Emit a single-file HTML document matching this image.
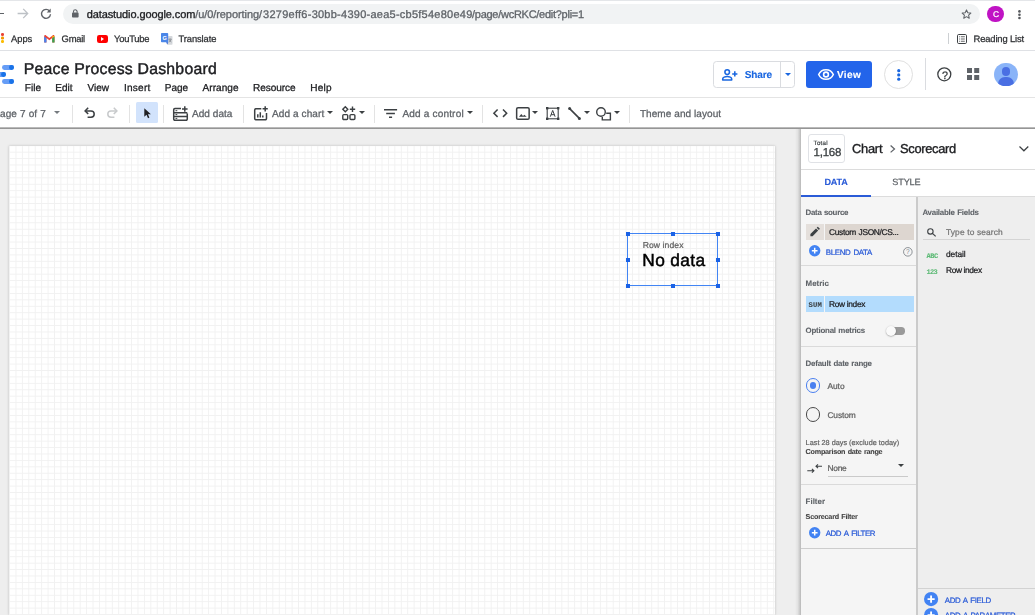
<!DOCTYPE html>
<html><head><meta charset="utf-8">
<style>
*{box-sizing:border-box;margin:0;padding:0}
html,body{width:1035px;height:615px;overflow:hidden;background:#fff;font-family:"Liberation Sans",sans-serif;color:#202124}
body{position:relative}
.a{position:absolute}
svg{position:absolute;overflow:visible}
.sep{position:absolute;top:105px;width:1px;height:17.500px;background:#e3e3e3}
.tri{position:absolute;width:0;height:0;margin-left:-.3px;border-top:3.400px solid #3c4043;border-left:3.200px solid transparent;border-right:3.200px solid transparent}
</style></head><body>

<!-- ===== Browser chrome ===== -->
<div class="a" style="left:0;top:0;width:1035px;height:1px;background:#e4e6e9"></div>
<div class="a" style="left:0;top:49.500px;width:1035px;height:1.500px;background:#dfe1e5"></div>
<div class="a" style="left:62.500px;top:3.500px;width:917px;height:20.500px;border-radius:10.250px;background:#f1f3f4"></div>
<div class="a" style="left:0;top:12.600px;width:4.300px;height:1.700px;background:#5f6368"></div>
<svg style="left:17px;top:8px" width="12" height="11" viewBox="0 0 12 11"><path d="M.6 5.500h10M6.200 .900l4.500 4.600-4.500 4.600" fill="none" stroke="#bdc1c6" stroke-width="1.300"/></svg>
<svg style="left:40px;top:8px" width="12" height="12" viewBox="0 0 12 12"><path d="M9.600 3.100A4.500 4.500 0 1 0 10.500 6.300" fill="none" stroke="#5f6368" stroke-width="1.400"/><path d="M10.700 .500v4H6.700z" fill="#5f6368"/></svg>
<svg style="left:72px;top:8.800px" width="7" height="9" viewBox="0 0 7 9"><rect x="0" y="3.600" width="6.600" height="5" rx=".8" fill="#5f6368"/><path d="M1.500 3.800V2.600a1.800 1.800 0 0 1 3.600 0v1.200" fill="none" stroke="#5f6368" stroke-width="1.100"/></svg>
<svg style="left:961px;top:9px" width="11" height="10" viewBox="0 0 24 23"><path d="M12 2l3 6.600 7 .8-5.200 4.800 1.500 7L12 17.600 5.700 21.200l1.500-7L2 9.400l7-.8z" fill="none" stroke="#5f6368" stroke-width="2.400" stroke-linejoin="round"/></svg>
<div class="a" style="left:987.400px;top:5.800px;width:16.300px;height:16.300px;border-radius:50%;background:#c013c4"></div>
<svg style="left:1017.800px;top:9.600px" width="3" height="10" viewBox="0 0 3 10"><circle cx="1.450" cy="1.400" r="1.300" fill="#55585c"/><circle cx="1.450" cy="4.700" r="1.300" fill="#55585c"/><circle cx="1.450" cy="8" r="1.300" fill="#55585c"/></svg>
<!-- bookmarks -->
<div class="a" style="left:1.300px;top:33.300px;width:2.700px;height:2.700px;border-radius:50%;background:#ea4335;box-shadow:0 3.500px 0 #f29900,0 7px 0 #fbbc04"></div>
<svg style="left:44.300px;top:35px" width="10.700" height="7.500" viewBox="0 0 11 8"><path d="M0 8V1.300C0 .2 1.200-.3 2 .400L5.500 3.200 9 .400C9.800-.3 11 .2 11 1.300V8H8.600V3.200L5.500 5.600 2.400 3.200V8z" fill="#ea4335"/><path d="M0 8V1.500l2.400 1.700V8z" fill="#4285f4"/><path d="M11 8V1.500L8.600 3.200V8z" fill="#34a853"/><path d="M8.600 3.200V.800L11 1.300v.2z" fill="#fbbc04"/></svg>
<div class="a" style="left:96.800px;top:34.600px;width:10.800px;height:8.200px;border-radius:2.200px;background:#f00"></div>
<div class="a" style="left:100.800px;top:36.700px;width:0;height:0;border-left:3.600px solid #fff;border-top:2px solid transparent;border-bottom:2px solid transparent"></div>
<svg style="left:160.800px;top:32.600px" width="11.600" height="11.800" viewBox="0 0 11.600 11.800"><rect x="6.200" y="3" width="5.300" height="8.700" rx=".8" fill="#d5d8dc"/><path d="M7.600 6.200h3M9.100 5.500v.7M8 6.300c.4 1.300 1.300 2.200 2.400 2.700M10.200 6.300c-.3 1.300-1.100 2.200-2.300 2.800" stroke="#6b7076" stroke-width=".55" fill="none"/><path d="M.8 0h5.600a.8.800 0 0 1 .8.800V9.200H.8a.8.800 0 0 1-.8-.8V.8A.8.800 0 0 1 .8 0z" fill="#4a86e8"/><path d="M5 9.200h2.200L6.400 11.400z" fill="#3367d6"/><text x="1.500" y="6.900" font-size="5.600" font-weight="700" font-family="'Liberation Sans',sans-serif" fill="#fff">G</text></svg>
<div class="a" style="left:948px;top:33.300px;width:1px;height:11px;background:#cdd0d3"></div>
<svg style="left:957px;top:34px" width="10" height="10" viewBox="0 0 10 10"><rect x=".5" y=".5" width="9" height="9" rx="1.200" fill="none" stroke="#3c4043" stroke-width="1"/><path d="M2.200 2.750h1M4 2.750h3.800M2.200 5h1M4 5h3.800M2.200 7.250h1M4 7.250h3.800" stroke="#3c4043" stroke-width=".8"/></svg>

<!-- ===== App header ===== -->
<div class="a" style="left:1.700px;top:65.200px;width:12.300px;height:4.800px;border-radius:2.400px;background:#669df6"></div>
<div class="a" style="left:9.200px;top:65.200px;width:4.800px;height:4.800px;border-radius:50%;background:#1a73e8"></div>
<div class="a" style="left:-10px;top:71.800px;width:16.100px;height:4.800px;border-radius:2.400px;background:#669df6"></div>
<div class="a" style="left:1.300px;top:71.800px;width:4.800px;height:4.800px;border-radius:50%;background:#1a73e8"></div>
<div class="a" style="left:1.700px;top:79px;width:12.300px;height:4.800px;border-radius:2.400px;background:#669df6"></div>
<div class="a" style="left:9.200px;top:79px;width:4.800px;height:4.800px;border-radius:50%;background:#1a73e8"></div>
<!-- share -->
<div class="a" style="left:713px;top:61px;width:82px;height:27px;border:1px solid #dadce0;border-radius:3.500px;background:#fff"></div>
<div class="a" style="left:780px;top:62px;width:1px;height:25px;background:#dadce0"></div>
<svg style="left:721.500px;top:69.200px" width="16" height="12" viewBox="0 0 16 12"><circle cx="5.200" cy="3.100" r="2.300" fill="none" stroke="#1a67e0" stroke-width="1.550"/><path d="M.700 11v-1.100c0-1.500 2.500-2.500 4.500-2.500s4.500 1 4.500 2.500V11z" fill="none" stroke="#1a67e0" stroke-width="1.550" stroke-linejoin="round"/><path d="M12.800 2.300v5.200M10.200 4.900h5.200" stroke="#1a67e0" stroke-width="1.550"/></svg>
<div class="a" style="left:784.500px;top:72.700px;width:0;height:0;border-top:3.200px solid #1a67e0;border-left:3px solid transparent;border-right:3px solid transparent"></div>
<!-- view -->
<div class="a" style="left:806.400px;top:61px;width:65.800px;height:26.700px;border-radius:3px;background:#2364ea"></div>
<svg style="left:818px;top:69.200px" width="16" height="11" viewBox="0 0 16 11"><path d="M.700 5.500C2.100 2.400 4.900 .700 8 .700s5.900 1.700 7.300 4.800C13.900 8.600 11.100 10.300 8 10.300S2.100 8.600 .700 5.500z" fill="none" stroke="#fff" stroke-width="1.600"/><circle cx="8" cy="5.500" r="2.400" fill="none" stroke="#fff" stroke-width="1.600"/></svg>
<!-- kebab -->
<div class="a" style="left:884px;top:60px;width:29px;height:29px;border:1px solid #e0e0e0;border-radius:50%"></div>
<svg style="left:896.800px;top:68.600px" width="3.600" height="12" viewBox="0 0 3.600 12"><circle cx="1.750" cy="1.700" r="1.600" fill="#1a67e0"/><circle cx="1.750" cy="5.950" r="1.600" fill="#1a67e0"/><circle cx="1.750" cy="10.200" r="1.600" fill="#1a67e0"/></svg>
<div class="a" style="left:924.500px;top:58px;width:1px;height:32px;background:#dadce0"></div>
<svg style="left:937px;top:67.200px" width="14.600" height="14.600" viewBox="0 0 14.600 14.600"><circle cx="7.300" cy="7.300" r="6.500" fill="none" stroke="#3c4043" stroke-width="1.300"/></svg>
<div class="a" style="left:967px;top:68.200px;width:4.800px;height:4.800px;background:#5f6368;box-shadow:7.200px 0 0 #5f6368,0 7px 0 #5f6368,7.200px 7px 0 #5f6368"></div>
<div class="a" style="left:994px;top:62.800px;width:23.500px;height:23.500px;border-radius:50%;background:#8ab4f8;overflow:hidden"><div class="a" style="left:7.500px;top:4.500px;width:8.500px;height:8.500px;border-radius:50%;background:#4a6fe3"></div><div class="a" style="left:4px;top:14.500px;width:15.500px;height:12px;border-radius:7px 7px 0 0;background:#4a6fe3"></div></div>

<!-- ===== Toolbar ===== -->
<div class="a" style="left:0;top:97px;width:1035px;height:1px;background:#e4e4e4"></div>
<div class="a" style="left:0;top:127px;width:1035px;height:2px;background:linear-gradient(#d6d6d6,#8f8f8f 62%,#a2a2a2)"></div>
<div class="a" style="left:53.600px;top:110.900px;width:0;height:0;border-top:3.600px solid #757a7f;border-left:3.400px solid transparent;border-right:3.400px solid transparent"></div>
<div class="sep" style="left:71.500px"></div>
<svg style="left:83.500px;top:107.300px" width="12" height="11" viewBox="0 0 12 11"><path d="M1.300 3.900h5.700a3.200 3.200 0 0 1 0 6.400H3.600" fill="none" stroke="#3c4043" stroke-width="1.500"/><path d="M4.200 .800L1.100 3.900l3.100 3.100" fill="none" stroke="#3c4043" stroke-width="1.500"/></svg>
<svg style="left:106.300px;top:107.300px" width="12" height="11" viewBox="0 0 12 11"><path d="M10.700 3.900H5a3.200 3.200 0 0 0 0 6.400h3.400" fill="none" stroke="#c8cacc" stroke-width="1.500"/><path d="M7.800 .800l3.100 3.100-3.100 3.100" fill="none" stroke="#c8cacc" stroke-width="1.500"/></svg>
<div class="sep" style="left:129.300px"></div>
<div class="a" style="left:135.700px;top:101.500px;width:22.200px;height:21.700px;background:#d2e3fc;border-radius:1.500px"></div>
<svg style="left:143.500px;top:108px" width="7.500" height="10.500" viewBox="0 0 7.500 10.500"><path d="M.3.200v8.500l2.200-2 1.500 3.500 1.400-.6-1.500-3.400h3z" fill="#202124"/></svg>
<div class="sep" style="left:163.200px"></div>
<!-- add data -->
<svg style="left:172.600px;top:105.500px" width="15.200" height="15" viewBox="0 0 15.200 15"><path d="M8 2.600H1.900a1.200 1.200 0 0 0-1.200 1.200v9.300a1.200 1.200 0 0 0 1.200 1.200h11.200a1.200 1.200 0 0 0 1.200-1.200V7.400M.700 6.700h13.600M.700 10.500h13.600" fill="none" stroke="#3c4043" stroke-width="1.500"/><path d="M11.800 .200v5.600M9 3h5.600" stroke="#3c4043" stroke-width="1.500"/><path d="M2.500 4.700h1.800M2.500 8.600h1.800M2.500 12.400h1.800" stroke="#3c4043" stroke-width="1"/></svg>
<div class="sep" style="left:243px"></div>
<!-- add chart -->
<svg style="left:253.500px;top:105.500px" width="14" height="14.500" viewBox="0 0 14 14.500"><path d="M7.300 2.700H1.900a1.200 1.200 0 0 0-1.200 1.200v8.700a1.200 1.200 0 0 0 1.200 1.200h9.400a1.200 1.200 0 0 0 1.200-1.200V7" fill="none" stroke="#3c4043" stroke-width="1.500"/><path d="M11.200 .200v5.200M8.600 2.800h5.200" stroke="#3c4043" stroke-width="1.500"/><path d="M3.800 11.600V8.300M6.300 11.600V6.200M8.800 11.600V9.400" stroke="#3c4043" stroke-width="1.500"/></svg>
<div class="tri" style="left:327.600px;top:111px"></div>
<!-- community viz -->
<svg style="left:342px;top:105.600px" width="14.200" height="14.200" viewBox="0 0 14.200 14.200"><path d="M3.300 .800L5.800 3.300 3.300 5.800.800 3.300z" fill="none" stroke="#3c4043" stroke-width="1.400"/><path d="M10.500 .600v5.400M7.800 3.300h5.400" stroke="#3c4043" stroke-width="1.400"/><rect x=".8" y="8.600" width="4.900" height="4.900" rx="1" fill="none" stroke="#3c4043" stroke-width="1.400"/><rect x="8" y="8.600" width="4.900" height="4.900" rx="1" fill="none" stroke="#3c4043" stroke-width="1.400"/></svg>
<div class="tri" style="left:359px;top:111px"></div>
<div class="sep" style="left:374px"></div>
<!-- filter -->
<svg style="left:384.200px;top:108.800px" width="13.100" height="9" viewBox="0 0 13.100 9"><path d="M0 .700h13.100M2.200 4.500h8.700M5 8.300h3.100" stroke="#3c4043" stroke-width="1.500"/></svg>
<div class="tri" style="left:467.200px;top:111px"></div>
<div class="sep" style="left:482.100px"></div>
<!-- code -->
<svg style="left:492.500px;top:109.300px" width="14.600" height="8.400" viewBox="0 0 14.600 8.400"><path d="M4.600 .500L.900 4.200l3.700 3.700M10 .500l3.700 3.700L10 7.900" fill="none" stroke="#3c4043" stroke-width="1.500"/></svg>
<!-- image -->
<svg style="left:515.700px;top:106.700px" width="13.800" height="13" viewBox="0 0 13.800 13"><rect x=".65" y=".65" width="12.500" height="11.700" rx="1.400" fill="none" stroke="#3c4043" stroke-width="1.500"/><path d="M3 9.800l2.300-2.800 1.700 2 1.300-1.300 2.400 2.100z" fill="#3c4043"/></svg>
<div class="tri" style="left:532.200px;top:111px"></div>
<!-- text box -->
<svg style="left:545.700px;top:106.700px" width="13.400" height="13" viewBox="0 0 13.400 13"><rect x="1.200" y="1.200" width="11" height="10.600" fill="none" stroke="#3c4043" stroke-width="1.100"/><rect width="2.400" height="2.400" fill="#3c4043"/><rect x="11" width="2.400" height="2.400" fill="#3c4043"/><rect y="10.600" width="2.400" height="2.400" fill="#3c4043"/><rect x="11" y="10.600" width="2.400" height="2.400" fill="#3c4043"/><path d="M4.300 9.700L6.700 3.400 9.100 9.700M5.100 7.700h3.200" fill="none" stroke="#3c4043" stroke-width="1"/></svg>
<!-- line -->
<svg style="left:568.300px;top:106.700px" width="13" height="13" viewBox="0 0 13 13"><path d="M1.600 1.600l9.800 9.800" stroke="#3c4043" stroke-width="1.600"/><circle cx="1.600" cy="1.600" r="1.500" fill="#3c4043"/><circle cx="11.400" cy="11.400" r="1.500" fill="#3c4043"/></svg>
<div class="tri" style="left:584.300px;top:111px"></div>
<!-- shape -->
<svg style="left:596.200px;top:106.700px" width="15.200" height="13.600" viewBox="0 0 15.200 13.600"><circle cx="5" cy="5" r="4.300" fill="none" stroke="#3c4043" stroke-width="1.400"/><path d="M10.200 6.300h4.200v6.600H6.300v-3" fill="none" stroke="#3c4043" stroke-width="1.400"/></svg>
<div class="tri" style="left:613.900px;top:111px"></div>
<div class="sep" style="left:628.700px"></div>

<!-- ===== Canvas ===== -->
<div class="a" style="left:0;top:129px;width:800px;height:486px;background:#eeeeee"></div>
<div class="a" style="left:9px;top:146px;width:766px;height:469px;background-color:#fff;box-shadow:0 0 2.500px rgba(0,0,0,.22);background-image:linear-gradient(to right,#f1f1f1 1px,transparent 1px),linear-gradient(to bottom,#f1f1f1 1px,transparent 1px);background-size:6.430px 6.430px;background-position:6.500px 5.700px"></div>
<div class="a" style="left:627.200px;top:233.400px;width:91.200px;height:52.800px;border:1px solid #4285f4"></div>
<div class="a" style="left:625.7px;top:231.9px;width:4px;height:4px;background:#1a62e6"></div>
<div class="a" style="left:625.7px;top:258.0px;width:4px;height:4px;background:#1a62e6"></div>
<div class="a" style="left:625.7px;top:283.7px;width:4px;height:4px;background:#1a62e6"></div>
<div class="a" style="left:670.8px;top:231.9px;width:4px;height:4px;background:#1a62e6"></div>
<div class="a" style="left:670.8px;top:283.7px;width:4px;height:4px;background:#1a62e6"></div>
<div class="a" style="left:715.9px;top:231.9px;width:4px;height:4px;background:#1a62e6"></div>
<div class="a" style="left:715.9px;top:258.0px;width:4px;height:4px;background:#1a62e6"></div>
<div class="a" style="left:715.9px;top:283.7px;width:4px;height:4px;background:#1a62e6"></div>


<!-- ===== Panel ===== -->
<div class="a" style="left:794.500px;top:129px;width:6.500px;height:486px;background:linear-gradient(to right,rgba(0,0,0,0),rgba(0,0,0,.05) 45%,rgba(0,0,0,.14) 75%,rgba(0,0,0,.31))"></div>
<div class="a" style="left:801px;top:129px;width:234px;height:486px;background:#fff"></div>
<div class="a" style="left:808.400px;top:134px;width:36.600px;height:28.600px;border:1px solid #e0e2e6;border-radius:3px;background:#fff"></div>
<svg style="left:889.500px;top:145.300px" width="5.400" height="7.900" viewBox="0 0 5.400 7.900"><path d="M.600 .500L4.500 3.950 .600 7.400" fill="none" stroke="#5f6368" stroke-width="1.250"/></svg>
<svg style="left:1019px;top:146.200px" width="9.800" height="5.600" viewBox="0 0 9.800 5.600"><path d="M.500 .500L4.900 4.800 9.300 .500" fill="none" stroke="#3c4043" stroke-width="1.200"/></svg>
<div class="a" style="left:801.200px;top:168.600px;width:234px;height:1px;background:#dcdcdc"></div>
<div class="a" style="left:801.200px;top:196.200px;width:234px;height:1px;background:#dcdcdc"></div>
<div class="a" style="left:801.200px;top:194.700px;width:70.100px;height:2px;background:#2a5bd7"></div>
<!-- columns -->
<div class="a" style="left:801.200px;top:197px;width:116.800px;height:418px;background:#f5f5f5;border-right:2px solid #cbcbcb"></div>
<div class="a" style="left:918px;top:197px;width:117px;height:418px;background:#eeeeee"></div>
<!-- data source -->
<div class="a" style="left:806px;top:224px;width:17.600px;height:15.800px;background:#e4dfdb"></div>
<div class="a" style="left:825px;top:224px;width:88.600px;height:15.800px;background:#ddd6d0"></div>
<svg style="left:810px;top:227px" width="9.600" height="9.600" viewBox="0 0 9.600 9.600"><path d="M.400 9.200V7L6 1.400l2.200 2.200L2.600 9.200zM6.700 .700l.8-.8a.400.400 0 0 1 .6 0L9.700 1.500a.400.400 0 0 1 0 .6l-.8.800z" fill="#3c4043"/></svg>
<svg style="left:808.8px;top:245px" width="11.4" height="11.4" viewBox="0 0 11.4 11.4"><circle cx="5.7" cy="5.7" r="5.7" fill="#4283f3"/><path d="M5.7 2.85v5.70M2.85 5.7h5.70" stroke="#fff" stroke-width="1.48"/></svg>
<svg style="left:903.300px;top:246.900px" width="9.700" height="9.700" viewBox="0 0 9.700 9.700"><circle cx="4.850" cy="4.850" r="4.300" fill="none" stroke="#80868b" stroke-width=".9"/><text x="4.850" y="7.300" font-size="6.500" font-family="'Liberation Sans',sans-serif" text-anchor="middle" fill="#80868b">?</text></svg>
<div class="a" style="left:801.200px;top:265.200px;width:115px;height:1px;background:#dadada"></div>
<!-- metric -->
<div class="a" style="left:806px;top:296.400px;width:17.600px;height:16px;background:#b3dcfd"></div>
<div class="a" style="left:825px;top:296.400px;width:88.600px;height:16px;background:#b3dcfd"></div>
<div class="a" style="left:890.700px;top:327.200px;width:14.300px;height:7.400px;border-radius:3.700px;background:#9a9a9a"></div>
<div class="a" style="left:886.200px;top:325.800px;width:10.200px;height:10.200px;border-radius:50%;background:#fafafa;box-shadow:0 .500px 1.500px rgba(0,0,0,.4)"></div>
<div class="a" style="left:801.200px;top:345.800px;width:115px;height:1px;background:#dadada"></div>
<!-- date range -->
<div class="a" style="left:805.700px;top:378.400px;width:14.700px;height:14.700px;border-radius:50%;border:1.900px solid #4a80f0"></div>
<div class="a" style="left:809.700px;top:382.400px;width:6.700px;height:6.700px;border-radius:50%;background:#4a80f0"></div>
<div class="a" style="left:805.700px;top:407.400px;width:14.700px;height:14.700px;border-radius:50%;border:1.800px solid #4a4a4a"></div>
<svg style="left:806.700px;top:464.200px" width="15.300" height="9" viewBox="0 0 15.300 9"><path d="M15 2.200H9.200M11 .300L9 2.200l2 1.900M.300 6.800h6.400M4.900 4.900l2 1.900-2 1.900" fill="none" stroke="#3c4043" stroke-width="1.100"/></svg>
<div class="a" style="left:898px;top:464.200px;width:0;height:0;border-top:3.400px solid #3c4043;border-left:3px solid transparent;border-right:3px solid transparent"></div>
<div class="a" style="left:827.800px;top:476.300px;width:80.100px;height:1px;background:#cacaca"></div>
<div class="a" style="left:801.200px;top:483.600px;width:115px;height:1px;background:#dadada"></div>
<!-- filter -->
<svg style="left:808.8px;top:526.8px" width="11.4" height="11.4" viewBox="0 0 11.4 11.4"><circle cx="5.7" cy="5.7" r="5.7" fill="#4283f3"/><path d="M5.7 2.85v5.70M2.85 5.7h5.70" stroke="#fff" stroke-width="1.48"/></svg>
<div class="a" style="left:801.200px;top:547.900px;width:115px;height:1.300px;background:#cdcdcd"></div>
<!-- available fields -->
<svg style="left:927px;top:227.900px" width="9.200" height="8.600" viewBox="0 0 9.200 8.600"><circle cx="3.400" cy="3.400" r="2.700" fill="none" stroke="#3c4043" stroke-width="1.100"/><path d="M5.400 5.400l3.300 3" stroke="#3c4043" stroke-width="1.200"/></svg>
<div class="a" style="left:922.800px;top:239px;width:107.600px;height:1px;background:#d4d4d4"></div>
<div class="a" style="left:918px;top:587.600px;width:117px;height:1px;background:#d2d2d2"></div>
<svg style="left:924px;top:592px" width="14.2" height="14.2" viewBox="0 0 14.2 14.2"><circle cx="7.1" cy="7.1" r="7.1" fill="#4283f3"/><path d="M7.1 3.55v7.10M3.55 7.1h7.10" stroke="#fff" stroke-width="1.85"/></svg>
<svg style="left:924px;top:608px" width="14.2" height="14.2" viewBox="0 0 14.2 14.2"><circle cx="7.1" cy="7.1" r="7.1" fill="#4283f3"/><path d="M7.1 3.55v7.10M3.55 7.1h7.10" stroke="#fff" stroke-width="1.85"/></svg>
<svg id="txt" style="left:0;top:0;z-index:5;will-change:transform;text-rendering:geometricPrecision" width="1035" height="615" viewBox="0 0 1035 615">
<text x="86.70" y="17.70" font-size="11" fill="#202124" font-weight="400" font-family="'Liberation Sans',sans-serif" letter-spacing="-0.101" stroke="#202124" stroke-width="0.31">datastudio.google.com</text>
<text x="195.20" y="17.70" font-size="11" fill="#5f6368" font-weight="400" font-family="'Liberation Sans',sans-serif" letter-spacing="-0.073" stroke="#5f6368" stroke-width="0.31">/u/0/reporting/</text>
<text x="263.10" y="17.70" font-size="11" fill="#5f6368" font-weight="400" font-family="'Liberation Sans',sans-serif" letter-spacing="0.251" stroke="#5f6368" stroke-width="0.31">3279eff6-30bb-4390-aea5-cb5f54e80e49</text>
<text x="472.00" y="17.70" font-size="11" fill="#5f6368" font-weight="400" font-family="'Liberation Sans',sans-serif" letter-spacing="-0.267" stroke="#5f6368" stroke-width="0.31">/page/wcRKC/edit?pli=1</text>
<text x="993.00" y="17.00" font-size="8.3" fill="#ffffff" font-weight="400" font-family="'Liberation Sans',sans-serif" letter-spacing="0.000" stroke="#ffffff" stroke-width="0.23">C</text>
<text x="11.10" y="41.70" font-size="9.4" fill="#2e3033" font-weight="400" font-family="'Liberation Sans',sans-serif" letter-spacing="-0.062" stroke="#2e3033" stroke-width="0.26">Apps</text>
<text x="61.60" y="41.70" font-size="9.4" fill="#2e3033" font-weight="400" font-family="'Liberation Sans',sans-serif" letter-spacing="-0.225" stroke="#2e3033" stroke-width="0.26">Gmail</text>
<text x="114.00" y="41.70" font-size="9.4" fill="#2e3033" font-weight="400" font-family="'Liberation Sans',sans-serif" letter-spacing="-0.222" stroke="#2e3033" stroke-width="0.26">YouTube</text>
<text x="178.50" y="41.70" font-size="9.4" fill="#2e3033" font-weight="400" font-family="'Liberation Sans',sans-serif" letter-spacing="-0.103" stroke="#2e3033" stroke-width="0.26">Translate</text>
<text x="973.60" y="41.70" font-size="9.4" fill="#2e3033" font-weight="400" font-family="'Liberation Sans',sans-serif" letter-spacing="-0.147" stroke="#2e3033" stroke-width="0.26">Reading List</text>
<text x="23.80" y="73.60" font-size="15.8" fill="#202124" font-weight="400" font-family="'Liberation Sans',sans-serif" letter-spacing="0.226" stroke="#202124" stroke-width="0.44">Peace Process Dashboard</text>
<text x="24.80" y="91.30" font-size="10.06" fill="#202124" font-weight="400" font-family="'Liberation Sans',sans-serif" letter-spacing="0.028" stroke="#202124" stroke-width="0.28">File</text>
<text x="55.30" y="91.30" font-size="10.06" fill="#202124" font-weight="400" font-family="'Liberation Sans',sans-serif" letter-spacing="-0.007" stroke="#202124" stroke-width="0.28">Edit</text>
<text x="87.40" y="91.30" font-size="10.06" fill="#202124" font-weight="400" font-family="'Liberation Sans',sans-serif" letter-spacing="0.015" stroke="#202124" stroke-width="0.28">View</text>
<text x="123.90" y="91.30" font-size="10.06" fill="#202124" font-weight="400" font-family="'Liberation Sans',sans-serif" letter-spacing="0.250" stroke="#202124" stroke-width="0.28">Insert</text>
<text x="164.80" y="91.30" font-size="10.06" fill="#202124" font-weight="400" font-family="'Liberation Sans',sans-serif" letter-spacing="-0.094" stroke="#202124" stroke-width="0.28">Page</text>
<text x="202.60" y="91.30" font-size="10.06" fill="#202124" font-weight="400" font-family="'Liberation Sans',sans-serif" letter-spacing="0.023" stroke="#202124" stroke-width="0.28">Arrange</text>
<text x="253.00" y="91.30" font-size="10.06" fill="#202124" font-weight="400" font-family="'Liberation Sans',sans-serif" letter-spacing="-0.073" stroke="#202124" stroke-width="0.28">Resource</text>
<text x="310.20" y="91.30" font-size="10.06" fill="#202124" font-weight="400" font-family="'Liberation Sans',sans-serif" letter-spacing="0.205" stroke="#202124" stroke-width="0.28">Help</text>
<text x="744.80" y="78.10" font-size="10.06" fill="#1a67e0" font-weight="700" font-family="'Liberation Sans',sans-serif" letter-spacing="-0.187" stroke="#1a67e0" stroke-width="0.12">Share</text>
<text x="837.00" y="78.10" font-size="10.06" fill="#ffffff" font-weight="700" font-family="'Liberation Sans',sans-serif" letter-spacing="0.332" stroke="#ffffff" stroke-width="0.12">View</text>
<text x="941.90" y="78.50" font-size="10.8" fill="#3c4043" font-weight="400" font-family="'Liberation Sans',sans-serif" letter-spacing="0.000" stroke="#3c4043" stroke-width="0.30">?</text>
<text x="-0.10" y="116.90" font-size="10.06" fill="#5f6368" font-weight="400" font-family="'Liberation Sans',sans-serif" letter-spacing="0.132" stroke="#5f6368" stroke-width="0.28">age 7 of 7</text>
<text x="191.90" y="116.90" font-size="10.06" fill="#5f6368" font-weight="400" font-family="'Liberation Sans',sans-serif" letter-spacing="0.050" stroke="#5f6368" stroke-width="0.28">Add data</text>
<text x="271.90" y="116.90" font-size="10.06" fill="#5f6368" font-weight="400" font-family="'Liberation Sans',sans-serif" letter-spacing="0.100" stroke="#5f6368" stroke-width="0.28">Add a chart</text>
<text x="402.40" y="116.90" font-size="10.06" fill="#5f6368" font-weight="400" font-family="'Liberation Sans',sans-serif" letter-spacing="0.169" stroke="#5f6368" stroke-width="0.28">Add a control</text>
<text x="639.90" y="116.90" font-size="10.06" fill="#5f6368" font-weight="400" font-family="'Liberation Sans',sans-serif" letter-spacing="0.050" stroke="#5f6368" stroke-width="0.28">Theme and layout</text>
<text x="642.70" y="247.50" font-size="8.6" fill="#616161" font-weight="400" font-family="'Liberation Sans',sans-serif" letter-spacing="0.084" stroke="#616161" stroke-width="0.24">Row index</text>
<text x="642.30" y="265.80" font-size="17.3" fill="#000000" font-weight="400" font-family="'Liberation Sans',sans-serif" letter-spacing="0.363" stroke="#000000" stroke-width="0.48">No data</text>
<text x="813.60" y="144.80" font-size="6.2" fill="#3c4043" font-weight="400" font-family="'Liberation Sans',sans-serif" letter-spacing="0.224" stroke="#3c4043" stroke-width="0.17">Total</text>
<text x="813.60" y="155.80" font-size="11.5" fill="#3c4043" font-weight="400" font-family="'Liberation Sans',sans-serif" letter-spacing="-0.246" stroke="#3c4043" stroke-width="0.32">1,168</text>
<text x="851.90" y="153.00" font-size="12.9" fill="#202124" font-weight="400" font-family="'Liberation Sans',sans-serif" letter-spacing="-0.237" stroke="#202124" stroke-width="0.36">Chart</text>
<text x="900.00" y="153.00" font-size="12.9" fill="#202124" font-weight="400" font-family="'Liberation Sans',sans-serif" letter-spacing="-0.312" stroke="#202124" stroke-width="0.36">Scorecard</text>
<text x="824.40" y="185.20" font-size="9.1" fill="#2a5bd7" font-weight="700" font-family="'Liberation Sans',sans-serif" letter-spacing="-0.146" stroke="#2a5bd7" stroke-width="0.11">DATA</text>
<text x="892.20" y="185.20" font-size="9.1" fill="#5f6368" font-weight="400" font-family="'Liberation Sans',sans-serif" letter-spacing="-0.087" stroke="#5f6368" stroke-width="0.25">STYLE</text>
<text x="805.60" y="215.30" font-size="7.9" fill="#5f6368" font-weight="700" font-family="'Liberation Sans',sans-serif" letter-spacing="-0.298" word-spacing="0.60" stroke="#5f6368" stroke-width="0.09">Data source</text>
<text x="829.00" y="234.60" font-size="8.4" fill="#202124" font-weight="400" font-family="'Liberation Sans',sans-serif" letter-spacing="-0.321" word-spacing="0.60" stroke="#202124" stroke-width="0.24">Custom JSON/CS...</text>
<text x="825.80" y="254.50" font-size="7.9" fill="#2a5bd7" font-weight="400" font-family="'Liberation Sans',sans-serif" letter-spacing="-0.357" word-spacing="1.30" stroke="#2a5bd7" stroke-width="0.22">BLEND DATA</text>
<text x="805.60" y="285.50" font-size="7.9" fill="#5f6368" font-weight="700" font-family="'Liberation Sans',sans-serif" letter-spacing="0.008" stroke="#5f6368" stroke-width="0.09">Metric</text>
<text x="808.60" y="307.30" font-size="7.2" fill="#3c4043" font-weight="700" font-family="'Liberation Mono',monospace" letter-spacing="0.130" stroke="#3c4043" stroke-width="0.09">SUM</text>
<text x="829.00" y="306.90" font-size="8.4" fill="#202124" font-weight="400" font-family="'Liberation Sans',sans-serif" letter-spacing="-0.340" stroke="#202124" stroke-width="0.24">Row index</text>
<text x="805.60" y="333.30" font-size="7.9" fill="#5f6368" font-weight="700" font-family="'Liberation Sans',sans-serif" letter-spacing="-0.225" word-spacing="0.60" stroke="#5f6368" stroke-width="0.09">Optional metrics</text>
<text x="805.60" y="366.20" font-size="7.9" fill="#5f6368" font-weight="700" font-family="'Liberation Sans',sans-serif" letter-spacing="-0.215" word-spacing="0.60" stroke="#5f6368" stroke-width="0.09">Default date range</text>
<text x="827.40" y="389.10" font-size="8.4" fill="#616161" font-weight="400" font-family="'Liberation Sans',sans-serif" letter-spacing="-0.026" stroke="#616161" stroke-width="0.24">Auto</text>
<text x="827.40" y="418.10" font-size="8.4" fill="#616161" font-weight="400" font-family="'Liberation Sans',sans-serif" letter-spacing="-0.097" stroke="#616161" stroke-width="0.24">Custom</text>
<text x="805.60" y="445.00" font-size="7.3" fill="#616161" font-weight="400" font-family="'Liberation Sans',sans-serif" letter-spacing="0.009" stroke="#616161" stroke-width="0.20">Last 28 days (exclude today)</text>
<text x="805.60" y="453.60" font-size="7.2" fill="#424242" font-weight="700" font-family="'Liberation Sans',sans-serif" letter-spacing="-0.224" word-spacing="0.60" stroke="#424242" stroke-width="0.09">Comparison date range</text>
<text x="827.40" y="470.70" font-size="8.4" fill="#616161" font-weight="400" font-family="'Liberation Sans',sans-serif" letter-spacing="-0.224" stroke="#616161" stroke-width="0.24">None</text>
<text x="805.60" y="503.90" font-size="7.9" fill="#5f6368" font-weight="700" font-family="'Liberation Sans',sans-serif" letter-spacing="0.015" stroke="#5f6368" stroke-width="0.09">Filter</text>
<text x="805.60" y="519.00" font-size="7.2" fill="#424242" font-weight="700" font-family="'Liberation Sans',sans-serif" letter-spacing="-0.202" word-spacing="0.60" stroke="#424242" stroke-width="0.09">Scorecard Filter</text>
<text x="825.80" y="536.20" font-size="7.9" fill="#2a5bd7" font-weight="400" font-family="'Liberation Sans',sans-serif" letter-spacing="-0.448" word-spacing="1.30" stroke="#2a5bd7" stroke-width="0.22">ADD A FILTER</text>
<text x="922.40" y="215.30" font-size="7.9" fill="#5f6368" font-weight="700" font-family="'Liberation Sans',sans-serif" letter-spacing="-0.231" word-spacing="0.60" stroke="#5f6368" stroke-width="0.09">Available Fields</text>
<text x="946.00" y="234.60" font-size="8.4" fill="#757575" font-weight="400" font-family="'Liberation Sans',sans-serif" letter-spacing="0.140" stroke="#757575" stroke-width="0.24">Type to search</text>
<text x="926.60" y="257.60" font-size="7" fill="#5bb974" font-weight="700" font-family="'Liberation Mono',monospace" letter-spacing="-0.554" stroke="#5bb974" stroke-width="0.08">ABC</text>
<text x="946.00" y="257.30" font-size="8.4" fill="#202124" font-weight="400" font-family="'Liberation Sans',sans-serif" letter-spacing="-0.074" stroke="#202124" stroke-width="0.24">detail</text>
<text x="926.60" y="273.70" font-size="7" fill="#5bb974" font-weight="700" font-family="'Liberation Mono',monospace" letter-spacing="-0.754" stroke="#5bb974" stroke-width="0.08">123</text>
<text x="946.00" y="273.30" font-size="8.4" fill="#202124" font-weight="400" font-family="'Liberation Sans',sans-serif" letter-spacing="-0.378" stroke="#202124" stroke-width="0.24">Row index</text>
<text x="944.80" y="602.60" font-size="7.9" fill="#2a5bd7" font-weight="400" font-family="'Liberation Sans',sans-serif" letter-spacing="-0.411" word-spacing="1.30" stroke="#2a5bd7" stroke-width="0.22">ADD A FIELD</text>
<text x="944.80" y="618.20" font-size="7.9" fill="#2a5bd7" font-weight="400" font-family="'Liberation Sans',sans-serif" letter-spacing="-0.398" word-spacing="1.30" stroke="#2a5bd7" stroke-width="0.22">ADD A PARAMETER</text>
</svg>
</body></html>
